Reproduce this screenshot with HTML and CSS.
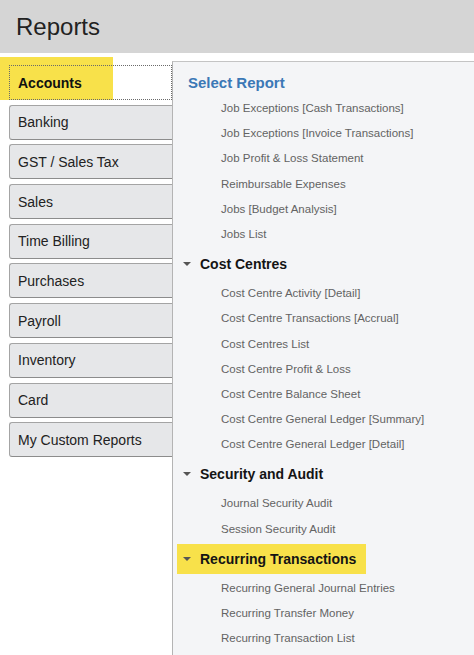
FILE: index.html
```html
<!DOCTYPE html>
<html lang="en">

<head>
    <meta charset="UTF-8">
    <meta name="viewport" content="width=device-width, initial-scale=1.0">
    <title>Reports</title>
    <link rel="stylesheet" href="styles.css">
</head>

<body>

    <header class="page-header">
        <h1>Reports</h1>
    </header>

    <div class="reports">
        <nav class="tabs">
            <div class="tab active">Accounts</div>
            <div class="tab">Banking</div>
            <div class="tab">GST / Sales Tax</div>
            <div class="tab">Sales</div>
            <div class="tab">Time Billing</div>
            <div class="tab">Purchases</div>
            <div class="tab">Payroll</div>
            <div class="tab">Inventory</div>
            <div class="tab">Card</div>
            <div class="tab">My Custom Reports</div>
        </nav>

        <div class="panel">
            <h2 class="panel-title">Select Report</h2>
            <ul class="report-list">
                <li>Job Exceptions [Cash Transactions]</li>
                <li>Job Exceptions [Invoice Transactions]</li>
                <li>Job Profit &amp; Loss Statement</li>
                <li>Reimbursable Expenses</li>
                <li>Jobs [Budget Analysis]</li>
                <li>Jobs List</li>
            </ul>

            <div class="group">
                <span class="group-label"><span class="caret"></span>Cost Centres</span>
            </div>
            <ul class="report-list">
                <li>Cost Centre Activity [Detail]</li>
                <li>Cost Centre Transactions [Accrual]</li>
                <li>Cost Centres List</li>
                <li>Cost Centre Profit &amp; Loss</li>
                <li>Cost Centre Balance Sheet</li>
                <li>Cost Centre General Ledger [Summary]</li>
                <li>Cost Centre General Ledger [Detail]</li>
            </ul>

            <div class="group">
                <span class="group-label"><span class="caret"></span>Security and Audit</span>
            </div>
            <ul class="report-list">
                <li>Journal Security Audit</li>
                <li>Session Security Audit</li>
            </ul>

            <div class="group">
                <span class="group-label marked"><span class="caret"></span>Recurring Transactions</span>
            </div>
            <ul class="report-list">
                <li>Recurring General Journal Entries</li>
                <li>Recurring Transfer Money</li>
                <li>Recurring Transaction List</li>
            </ul>
        </div>
    </div>

</body>
</html>
```

FILE: styles.css
```css
body {
    font-family: 'Liberation Sans', Arial, sans-serif;
    background-color: #fff;
    margin: 0;
    color: #1a1a1a;
    height: 655px;
    overflow: hidden;
}

.page-header {
    background-color: #d5d5d5;
    height: 53px;
    padding-left: 16px;
    display: flex;
    align-items: center;
}

.page-header h1 {
    margin: 0;
    font-size: 24px;
    font-weight: normal;
    color: #222;
}

.reports {
    display: flex;
    height: 602px;
}

.tabs {
    width: 163px;
    padding: 12px 0 0 9px;
    flex-shrink: 0;
}

.tab {
    height: 33px;
    margin-bottom: 4.7px;
    padding-left: 8px;
    display: flex;
    align-items: center;
    font-size: 14px;
    color: #222;
    background-color: #e6e7e9;
    border: 1px solid #a4a4a4;
    border-bottom-color: #8c8c8c;
    border-right: none;
    border-radius: 3px 0 0 3px;
}

.tab.active {
    position: relative;
    font-weight: bold;
    color: #111;
    background-color: transparent;
    border: 1px dotted #6a6a6a;
    border-radius: 0;
}

/* marker highlight over the selected tab */
.tab.active::before {
    content: '';
    position: absolute;
    left: -10px;
    top: -9px;
    width: 113px;
    height: 43px;
    background-color: #f8e14a;
    z-index: -1;
}

.panel {
    flex: 1;
    margin-top: 8px;
    background-color: #f4f5f7;
    border-top: 1px solid #c4c4c4;
    border-left: 1px solid #b4b4b4;
    padding-top: 8px;
}

.panel-title {
    margin: 0;
    height: 26px;
    line-height: 26px;
    padding-left: 15px;
    font-size: 15px;
    font-weight: bold;
    color: #3b78b6;
}

.report-list {
    list-style: none;
    margin: 0;
    padding: 0 0 0 48px;
}

.report-list li {
    height: 25.2px;
    line-height: 25.2px;
    font-size: 11.5px;
    color: #636363;
}

.group {
    height: 34px;
    display: flex;
    align-items: center;
    padding-left: 4px;
}

.group-label {
    height: 30px;
    display: flex;
    align-items: center;
    padding: 0 10px 0 6px;
    font-size: 14px;
    font-weight: bold;
    color: #141414;
}

.group-label.marked {
    background-color: #f8e14a;
}

.caret {
    width: 0;
    height: 0;
    border-left: 4px solid transparent;
    border-right: 4px solid transparent;
    border-top: 4px solid #555;
    margin-right: 9px;
}
```
